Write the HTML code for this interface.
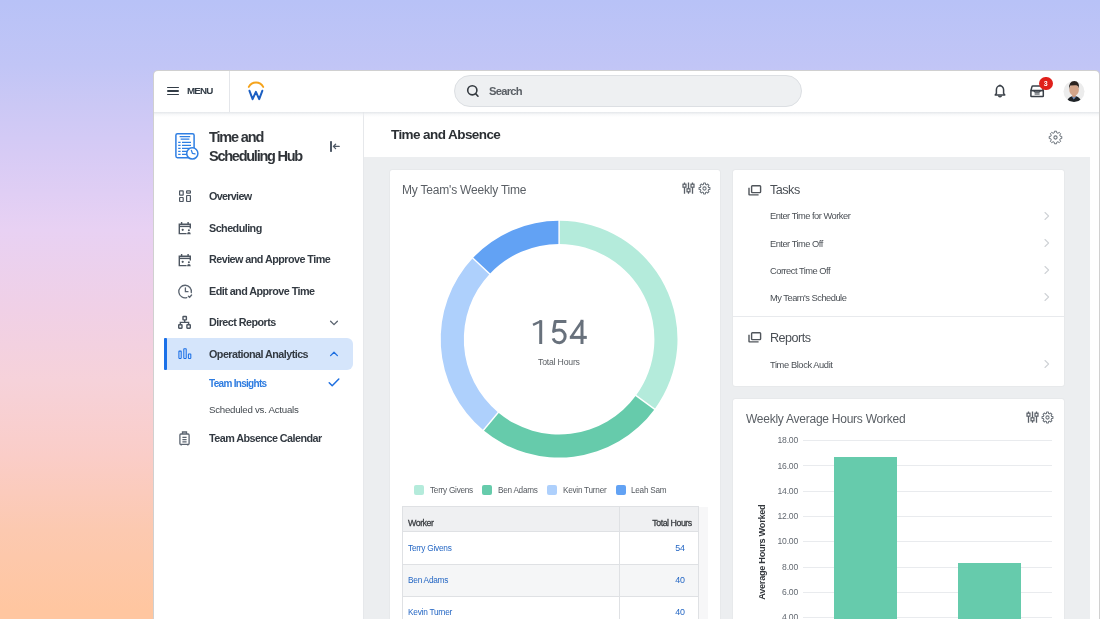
<!DOCTYPE html>
<html><head><meta charset="utf-8">
<style>
*{margin:0;padding:0;box-sizing:border-box;}
html,body{width:1100px;height:619px;overflow:hidden;}
body{font-family:"Liberation Sans",sans-serif;position:relative;
background:linear-gradient(180deg,#b8c2f7 0px,#c1c5f6 65px,#cbc8f5 105px,#d7cbf5 155px,#e8d1f3 230px,#f0d0e6 310px,#f6d2da 380px,#facdc8 455px,#fcc9b0 530px,#ffc6a0 610px);}
.a{position:absolute;}
.t{position:absolute;white-space:nowrap;line-height:1;will-change:transform;}
#win{position:absolute;left:153px;top:70px;width:947px;height:560px;background:#fff;border:1px solid rgba(60,60,60,0.24);border-radius:5px 5px 0 0;overflow:hidden;}
</style></head><body>
<div id="win"></div>

<!-- header -->

<div class="a" style="left:229px;top:71px;width:1px;height:41px;background:#e4e6ea"></div>

<!-- hamburger -->
<div class="a" style="left:167px;top:86.5px;width:12px;height:1.6px;background:#333d47;border-radius:1px"></div>
<div class="a" style="left:167px;top:90px;width:12px;height:1.6px;background:#333d47;border-radius:1px"></div>
<div class="a" style="left:167px;top:93.5px;width:12px;height:1.6px;background:#333d47;border-radius:1px"></div>
<div class="t" style="left:186.8px;top:86.2px;font-size:9.8px;font-weight:bold;color:#333d47;letter-spacing:-0.85px">MENU</div>

<!-- logo -->
<svg class="a" style="left:244px;top:78px" width="24" height="26" viewBox="0 0 24 26">
 <path d="M4.8 8.9 A8.1 8.1 0 0 1 19.2 8.9" fill="none" stroke="#f5a31b" stroke-width="1.9" stroke-linecap="round"/>
 <path d="M5.5 12.8 L8.6 21.2 L11.9 13.8 L15.2 21.2 L18.3 12.8" fill="none" stroke="#1c5fc2" stroke-width="2" stroke-linejoin="round" stroke-linecap="round"/>
</svg>

<!-- search -->
<div class="a" style="left:454px;top:75px;width:348px;height:32px;background:#eef0f2;border:1px solid #dcdfe3;border-radius:16px"></div>
<svg class="a" style="left:464px;top:82px" width="18" height="18" viewBox="0 0 18 18">
 <circle cx="8.3" cy="8.3" r="4.6" fill="none" stroke="#343a40" stroke-width="1.6"/>
 <path d="M11.6 11.6 L14 14.2" stroke="#343a40" stroke-width="1.6" stroke-linecap="round"/>
</svg>
<div class="t" style="left:489px;top:85.8px;font-size:11.2px;font-weight:bold;color:#5b6066;letter-spacing:-0.75px">Search</div>

<!-- right icons -->
<svg class="a" style="left:990px;top:80px" width="20" height="20" viewBox="0 0 20 20">
 <path d="M6.4 13.4 V9.8 A3.6 4.1 0 0 1 13.6 9.8 V13.4 L14.8 14.9 H5.2 Z" fill="none" stroke="#3a4048" stroke-width="1.5" stroke-linejoin="round"/>
 <path d="M8.4 15.6 Q10 18.2 11.6 15.6" fill="none" stroke="#3a4048" stroke-width="1.4"/>
 <circle cx="10" cy="5.4" r="0.9" fill="#3a4048"/>
</svg>
<svg class="a" style="left:1028px;top:83px" width="18" height="16" viewBox="0 0 18 16">
 <path d="M2.9 7.6 L3.9 3.9 Q4.1 3.1 4.9 3.1 L13.3 3.1 Q14.1 3.1 14.3 3.9 L15.3 7.6" fill="none" stroke="#3a4048" stroke-width="1.5" stroke-linejoin="round"/>
 <path d="M2.9 7.6 H15.3 V12.9 Q15.3 13.6 14.6 13.6 H3.6 Q2.9 13.6 2.9 12.9 Z" fill="none" stroke="#3a4048" stroke-width="1.5" stroke-linejoin="round"/>
 <path d="M3 7.6 H5.6 Q6.2 9 7 9 H11.2 Q12 9 12.6 7.6 H15.2" fill="none" stroke="#3a4048" stroke-width="1.3"/>
 <path d="M6.6 11 H11.6" stroke="#3a4048" stroke-width="1.1"/>
</svg>
<div class="a" style="left:1039px;top:76.5px;width:13.5px;height:13.5px;border-radius:50%;background:#e0201b;"></div>
<div class="t" style="left:1039px;top:80px;width:13.5px;text-align:center;font-size:7px;font-weight:bold;color:#fff">3</div>
<svg class="a" style="left:1063px;top:79.5px" width="22" height="23" viewBox="0 0 22 23">
 <defs><clipPath id="av"><circle cx="11" cy="11.5" r="10.5"/></clipPath></defs>
 <circle cx="11" cy="11.5" r="10.5" fill="#ececec"/>
 <g clip-path="url(#av)">
  <path d="M3.2 23 Q4.6 17.4 9 16.2 L13.2 16.2 Q17.4 17.2 18.8 23 Z" fill="#1f2327"/>
  <path d="M8.6 16.2 L10.8 19.6 L13.6 16.2 Z" fill="#6d8ec2"/>
 </g>
 <path d="M9.4 13.5 L12.6 13.5 L12.8 16.6 L10.6 17.6 L9.2 16.6 Z" fill="#c79478"/>
 <ellipse cx="11.1" cy="9.8" rx="4.8" ry="6" fill="#d3a58a"/>
 <path d="M6.1 9.2 Q5.4 1.4 11.4 1.1 Q16.6 1.4 16.1 8.4 Q15.6 5.4 13.4 5.2 Q10.4 5 7.4 5.6 Q6.4 6.8 6.1 9.2 Z" fill="#2b2420"/>
</svg>

<!-- sidebar -->
<div class="a" style="left:363px;top:112px;width:1px;height:510px;background:#e6e8eb"></div>
<div class="a" style="left:154px;top:112px;width:945px;height:5px;background:linear-gradient(rgba(225,228,232,0.9),rgba(240,242,244,0.5) 50%,rgba(255,255,255,0))"></div>


<!-- hub icon -->
<svg class="a" style="left:173px;top:131px" width="28" height="30" viewBox="0 0 28 30">
 <rect x="2.9" y="2.7" width="18.2" height="24" rx="1.6" fill="none" stroke="#2f7fe3" stroke-width="1.5"/>
 <path d="M6.6 5.6 H17.2 M7.6 8.2 H16.4" stroke="#2f7fe3" stroke-width="1.3"/>
 <path d="M5.2 11.4 H7.6 M9 11.4 H18 M5.2 14.4 H7.6 M9 14.4 H18 M5.2 17.4 H7.6 M9 17.4 H18 M5.2 20.4 H7.6 M9 20.4 H18 M5.2 23.4 H7.6 M9 23.4 H18" stroke="#2f7fe3" stroke-width="1.3"/>
 <circle cx="19.3" cy="22.4" r="5.6" fill="#fff" stroke="#2f7fe3" stroke-width="1.5"/>
 <path d="M18.4 19.4 L19.4 22.4 L22 22.8" fill="none" stroke="#2f7fe3" stroke-width="1.3" stroke-linecap="round" stroke-linejoin="round"/>
</svg>
<div class="t" style="left:208.5px;top:130.3px;font-size:14.5px;font-weight:bold;color:#303439;letter-spacing:-1.15px">Time and</div>
<div class="t" style="left:208.5px;top:149.2px;font-size:14.5px;font-weight:bold;color:#303439;letter-spacing:-1.25px">Scheduling Hub</div>
<!-- collapse -->
<div class="a" style="left:330.2px;top:141px;width:1.4px;height:10.6px;background:#505a67;border-radius:0.7px"></div>
<svg class="a" style="left:332px;top:142px" width="9" height="9" viewBox="0 0 9 9">
 <path d="M1.4 4.4 H7.2 M3.6 2.2 L1.4 4.4 L3.6 6.6" fill="none" stroke="#505a67" stroke-width="1.3" stroke-linecap="round" stroke-linejoin="round"/>
</svg>

<!-- nav icons -->
<svg class="a" style="left:176px;top:188px" width="16" height="16" viewBox="0 0 16 16">
 <g fill="none" stroke="#4d5661" stroke-width="1.2">
 <rect x="3.6" y="2.9" width="3.6" height="4.3" rx="0.4"/><rect x="3.6" y="9.5" width="3.6" height="4" rx="0.4"/>
 <rect x="10.6" y="2.9" width="3.8" height="2.3" rx="0.4"/><rect x="10.6" y="7.5" width="3.8" height="6" rx="0.4"/>
 </g>
</svg>
<svg class="a" style="left:176px;top:220px" width="16" height="16" viewBox="0 0 16 16">
 <g fill="none" stroke="#4d5661" stroke-width="1.4">
 <path d="M14.3 8.6 V4.3 H3.3 V13.6 H10.6"/><path d="M3.3 6.4 H14.3"/><path d="M5.6 2 V4.6 M12.1 2 V4.6"/>
 </g>
 <circle cx="6.7" cy="9.8" r="1.1" fill="#4d5661"/>
 <circle cx="12.9" cy="10.3" r="1" fill="#4d5661"/><path d="M11 14.3 Q11.2 11.9 12.9 11.9 Q14.6 11.9 14.8 14.3 Z" fill="#4d5661"/>
</svg>
<svg class="a" style="left:176px;top:252px" width="16" height="16" viewBox="0 0 16 16">
 <g fill="none" stroke="#4d5661" stroke-width="1.4">
 <path d="M14.3 8.6 V4.3 H3.3 V13.6 H10.6"/><path d="M3.3 6.4 H14.3"/><path d="M5.6 2 V4.6 M12.1 2 V4.6"/>
 </g>
 <circle cx="6.7" cy="9.8" r="1.1" fill="#4d5661"/>
 <circle cx="12.9" cy="10.3" r="1" fill="#4d5661"/><path d="M11 14.3 Q11.2 11.9 12.9 11.9 Q14.6 11.9 14.8 14.3 Z" fill="#4d5661"/>
</svg>
<svg class="a" style="left:177px;top:282.7px" width="17" height="17" viewBox="0 0 17 17">
 <g fill="none" stroke="#5b6470" stroke-width="1.3" stroke-linecap="round">
 <path d="M14.3 9.6 A6.3 6.3 0 1 0 9.8 14.6"/><path d="M8.4 5 V8.7 H11"/><path d="M11.4 13.2 L12.6 14.3 L14.6 12"/>
 </g>
</svg>
<svg class="a" style="left:176px;top:315px" width="17" height="16" viewBox="0 0 17 16">
 <g fill="none" stroke="#4d5661" stroke-width="1.4">
 <rect x="7" y="1.5" width="3.4" height="3.4" rx="0.4"/><rect x="2.7" y="9.8" width="3.3" height="3.4" rx="0.4"/><rect x="10.9" y="9.8" width="3.4" height="3.4" rx="0.4"/>
 <path d="M8.7 4.9 V7.4 M4.35 9.8 V7.4 H12.6 V9.8"/>
 </g>
</svg>
<svg class="a" style="left:329px;top:318px" width="10" height="10" viewBox="0 0 10 10">
 <path d="M1.6 3.2 L5 6.6 L8.4 3.2" fill="none" stroke="#5b6470" stroke-width="1.3" stroke-linecap="round" stroke-linejoin="round"/>
</svg>

<!-- selected -->
<div class="a" style="left:164px;top:338px;width:188.5px;height:32px;background:#d5e5fb;border-radius:0 6px 6px 0"></div>
<div class="a" style="left:163.8px;top:338px;width:2.8px;height:32px;background:#1a70e8;border-radius:1px"></div>
<svg class="a" style="left:176px;top:346px" width="17" height="15" viewBox="0 0 17 15">
 <g fill="none" stroke="#1a6fe6" stroke-width="1.05">
 <rect x="2.9" y="5.1" width="2.3" height="7.3" rx="0.3"/><rect x="7.8" y="2.8" width="2.4" height="9.6" rx="0.3"/><rect x="12.4" y="7.9" width="2.4" height="4.5" rx="0.3"/>
 </g>
</svg>
<svg class="a" style="left:329px;top:349px" width="10" height="10" viewBox="0 0 10 10">
 <path d="M1.6 6.6 L5 3.2 L8.4 6.6" fill="none" stroke="#1e6fe0" stroke-width="1.3" stroke-linecap="round" stroke-linejoin="round"/>
</svg>
<svg class="a" style="left:328px;top:377px" width="12" height="11" viewBox="0 0 12 11">
 <path d="M1.2 5.8 L4.2 8.8 L10.8 2" fill="none" stroke="#1e6fe0" stroke-width="1.5" stroke-linecap="round" stroke-linejoin="round"/>
</svg>
<svg class="a" style="left:177px;top:430px" width="15" height="16" viewBox="0 0 15 16">
 <g fill="none" stroke="#5b6470" stroke-width="1.3">
 <rect x="2.9" y="4" width="9.2" height="10.4" rx="1"/><path d="M5.5 4 V2 H9.5 V4"/><path d="M5.4 7.4 H9.6 M5.4 9.6 H9.6 M5.4 11.8 H9.6"/>
 <path d="M4.2 14.4 V15.4 M10.8 14.4 V15.4"/>
 </g>
</svg>

<div class="t" style="left:208.5px;top:191px;font-size:10.8px;font-weight:bold;color:#333a42;letter-spacing:-0.7px">Overview</div>
<div class="t" style="left:208.5px;top:222.5px;font-size:10.8px;font-weight:bold;color:#333a42;letter-spacing:-0.55px">Scheduling</div>
<div class="t" style="left:208.5px;top:254px;font-size:10.8px;font-weight:bold;color:#333a42;letter-spacing:-0.55px">Review and Approve Time</div>
<div class="t" style="left:208.5px;top:285.5px;font-size:10.8px;font-weight:bold;color:#333a42;letter-spacing:-0.55px">Edit and Approve Time</div>
<div class="t" style="left:208.5px;top:317.3px;font-size:10.8px;font-weight:bold;color:#333a42;letter-spacing:-0.55px">Direct Reports</div>
<div class="t" style="left:208.5px;top:348.7px;font-size:10.8px;font-weight:bold;color:#333a42;letter-spacing:-0.55px">Operational Analytics</div>
<div class="t" style="left:208.5px;top:379.2px;font-size:10px;font-weight:bold;color:#2e7ce0;letter-spacing:-0.7px">Team Insights</div>
<div class="t" style="left:208.5px;top:404.8px;font-size:9.7px;color:#444a50;letter-spacing:-0.25px">Scheduled vs. Actuals</div>
<div class="t" style="left:208.5px;top:432.7px;font-size:10.8px;font-weight:bold;color:#333a42;letter-spacing:-0.55px">Team Absence Calendar</div>

<!-- content gray -->
<div class="a" style="left:364px;top:157px;width:726px;height:470px;background:#eceef0"></div>
<div class="t" style="left:390.5px;top:127.5px;font-size:13.5px;font-weight:bold;color:#2b2f33;letter-spacing:-0.58px">Time and Absence</div>
<svg class="a" style="left:1048.3px;top:129.5px" width="15" height="15" viewBox="0 0 24 24">
 <path fill="none" stroke="#6c737b" stroke-width="1.6" stroke-linejoin="round" d="M10.06 4.45 L10.33 1.94 L13.67 1.94 L13.94 4.45 L15.97 5.29 L17.93 3.70 L20.30 6.07 L18.71 8.03 L19.55 10.06 L22.06 10.33 L22.06 13.67 L19.55 13.94 L18.71 15.97 L20.30 17.93 L17.93 20.30 L15.97 18.71 L13.94 19.55 L13.67 22.06 L10.33 22.06 L10.06 19.55 L8.03 18.71 L6.07 20.30 L3.70 17.93 L5.29 15.97 L4.45 13.94 L1.94 13.67 L1.94 10.33 L4.45 10.06 L5.29 8.03 L3.70 6.07 L6.07 3.70 L8.03 5.29 Z"/>
 <circle cx="12" cy="12" r="2.6" fill="none" stroke="#6c737b" stroke-width="1.7"/>
</svg>

<!-- card 1 -->
<div class="a" style="left:390px;top:170px;width:330px;height:460px;background:#fff;border-radius:2.5px;box-shadow:0 0 1px 1px rgba(0,0,0,0.025)"></div>
<!-- card 2 -->
<div class="a" style="left:733px;top:170px;width:331px;height:216px;background:#fff;border-radius:2.5px;box-shadow:0 0 1px 1px rgba(0,0,0,0.025)"></div>
<!-- card 3 -->
<div class="a" style="left:733px;top:399px;width:331px;height:230px;background:#fff;border-radius:2.5px;box-shadow:0 0 1px 1px rgba(0,0,0,0.025)"></div>

<div class="t" style="left:402px;top:183.5px;font-size:12px;color:#5a5f65;letter-spacing:-0.2px">My Team's Weekly Time</div>
<svg class="a" style="left:681px;top:181px" width="14" height="14" viewBox="0 0 14 14">
 <g stroke="#5a6068" stroke-width="1.3" fill="none">
 <path d="M3.5 1.5 V12.8 M7.5 1.5 V12.8 M11.5 1.5 V12.8"/>
 </g>
 <rect x="2" y="3.2" width="3" height="3" fill="#fff" stroke="#5a6068" stroke-width="1.2"/>
 <rect x="6" y="7.8" width="3" height="3" fill="#fff" stroke="#5a6068" stroke-width="1.2"/>
 <rect x="10" y="3.2" width="3" height="3" fill="#fff" stroke="#5a6068" stroke-width="1.2"/>
</svg>
<svg class="a" style="left:697.8px;top:182.4px" width="13" height="13" viewBox="0 0 24 24">
 <path fill="none" stroke="#6c737b" stroke-width="1.9" stroke-linejoin="round" d="M10.06 4.45 L10.33 1.94 L13.67 1.94 L13.94 4.45 L15.97 5.29 L17.93 3.70 L20.30 6.07 L18.71 8.03 L19.55 10.06 L22.06 10.33 L22.06 13.67 L19.55 13.94 L18.71 15.97 L20.30 17.93 L17.93 20.30 L15.97 18.71 L13.94 19.55 L13.67 22.06 L10.33 22.06 L10.06 19.55 L8.03 18.71 L6.07 20.30 L3.70 17.93 L5.29 15.97 L4.45 13.94 L1.94 13.67 L1.94 10.33 L4.45 10.06 L5.29 8.03 L3.70 6.07 L6.07 3.70 L8.03 5.29 Z"/>
 <circle cx="12" cy="12" r="3" fill="none" stroke="#6c737b" stroke-width="1.9"/>
</svg>
<svg class="a" style="left:0;top:0" width="1100" height="619"><path d="M559.10 220.80 A118.4 118.4 0 0 1 654.60 409.18 L635.97 395.53 A95.3 95.3 0 0 0 559.10 243.90 Z" fill="#b4ebdb"/><path d="M654.60 409.18 A118.4 118.4 0 0 1 483.41 430.24 L498.17 412.48 A95.3 95.3 0 0 0 635.97 395.53 Z" fill="#66cbab"/><path d="M483.41 430.24 A118.4 118.4 0 0 1 472.86 258.08 L489.68 273.91 A95.3 95.3 0 0 0 498.17 412.48 Z" fill="#aed0fc"/><path d="M472.86 258.08 A118.4 118.4 0 0 1 559.10 220.80 L559.10 243.90 A95.3 95.3 0 0 0 489.68 273.91 Z" fill="#62a2f4"/><path d="M559.10 245.90 L559.10 218.80" stroke="#fff" stroke-width="1.4"/><path d="M634.36 394.35 L656.22 410.37" stroke="#fff" stroke-width="1.4"/><path d="M499.45 410.94 L482.13 431.78" stroke="#fff" stroke-width="1.4"/><path d="M491.14 275.28 L471.40 256.71" stroke="#fff" stroke-width="1.4"/></svg>
<svg class="a" style="left:0;top:0" width="1100" height="619"><g fill="none" stroke="#68717c" stroke-width="3.0">
 <path d="M540.7 344 V320.2" /><path d="M533 324.9 L541.2 321" stroke-width="2.3"/>
 <path stroke-linejoin="round" d="M566.4 321.4 H555.2 L553.6 331.4 C555 330.4 557 330.1 559.4 330.1 A5.75 6.3 0 0 1 565.15 336.4 A5.75 6.3 0 0 1 559.4 342.7 C556.3 342.7 554.1 341.3 553.2 338.4"/>
 <path d="M582 344 V319.8"/><path d="M582.4 320.6 L571 337.2" stroke-width="2.6"/><path d="M569.8 337.4 H586.8"/>
</g></svg>
<div class="t" style="left:537.5px;top:357.6px;font-size:8.7px;color:#5d6166;letter-spacing:-0.2px">Total Hours</div>

<!-- legend -->
<div class="a" style="left:413.6px;top:484.8px;width:10.5px;height:10.5px;border-radius:2px;background:#b4ebdb"></div>
<div class="a" style="left:481.8px;top:484.8px;width:10.5px;height:10.5px;border-radius:2px;background:#66cbab"></div>
<div class="a" style="left:546.9px;top:484.8px;width:10.5px;height:10.5px;border-radius:2px;background:#aed0fc"></div>
<div class="a" style="left:615.6px;top:484.8px;width:10.5px;height:10.5px;border-radius:2px;background:#62a2f4"></div>
<div class="t" style="left:429.5px;top:486.5px;font-size:8.2px;color:#555a60;letter-spacing:-0.25px">Terry Givens</div>
<div class="t" style="left:497.8px;top:486.5px;font-size:8.2px;color:#555a60;letter-spacing:-0.25px">Ben Adams</div>
<div class="t" style="left:562.8px;top:486.5px;font-size:8.2px;color:#555a60;letter-spacing:-0.25px">Kevin Turner</div>
<div class="t" style="left:631.3px;top:486.5px;font-size:8.2px;color:#555a60;letter-spacing:-0.25px">Leah Sam</div>

<!-- table -->
<div class="a" style="left:698.5px;top:506.5px;width:9px;height:130px;background:#f7f7f8"></div>
<div class="a" style="left:402px;top:506px;width:297px;height:130px;border:1px solid #dfe1e4;background:#fff"></div>
<div class="a" style="left:403px;top:507px;width:295px;height:24.5px;background:#eff0f2"></div>
<div class="a" style="left:403px;top:531px;width:295px;height:1px;background:#dfe1e4"></div>
<div class="a" style="left:403px;top:564px;width:295px;height:32px;background:#f5f6f7"></div>
<div class="a" style="left:403px;top:563.5px;width:295px;height:1px;background:#dfe1e4"></div>
<div class="a" style="left:403px;top:596px;width:295px;height:1px;background:#dfe1e4"></div>
<div class="a" style="left:619px;top:507px;width:1px;height:130px;background:#dfe1e4"></div>
<div class="t" style="left:408px;top:518.5px;font-size:8.8px;color:#3a3d41;-webkit-text-stroke:0.3px #3a3d41;letter-spacing:-0.45px">Worker</div>
<div class="t" style="left:591px;top:518.5px;width:100.8px;text-align:right;font-size:8.8px;color:#3a3d41;-webkit-text-stroke:0.3px #3a3d41;letter-spacing:-0.45px">Total Hours</div>
<div class="t" style="left:408px;top:543.5px;font-size:8.3px;color:#2567c4;letter-spacing:-0.25px">Terry Givens</div>
<div class="t" style="left:408px;top:575.6px;font-size:8.3px;color:#2567c4;letter-spacing:-0.25px">Ben Adams</div>
<div class="t" style="left:408px;top:608px;font-size:8.3px;color:#2567c4;letter-spacing:-0.25px">Kevin Turner</div>
<div class="t" style="left:635px;top:543.5px;width:50px;text-align:right;font-size:8.9px;color:#2567c4">54</div>
<div class="t" style="left:635px;top:575.6px;width:50px;text-align:right;font-size:8.9px;color:#2567c4">40</div>
<div class="t" style="left:635px;top:608px;width:50px;text-align:right;font-size:8.9px;color:#2567c4">40</div>

<svg class="a" style="left:747px;top:183.5px" width="16" height="13" viewBox="0 0 16 13"><rect x="4.6" y="1.7" width="9" height="6.9" rx="0.8" fill="none" stroke="#50555b" stroke-width="1.4"/><path d="M2 3.8 V10.5 Q2 10.9 2.4 10.9 H11.6" fill="none" stroke="#50555b" stroke-width="1.4"/></svg>
<div class="t" style="left:769.5px;top:183.5px;font-size:12.6px;color:#4a4f55;letter-spacing:-0.5px">Tasks</div>
<div class="t" style="left:769.5px;top:212.4px;font-size:9.3px;color:#4a4f55;letter-spacing:-0.5px">Enter Time for Worker</div>
<div class="t" style="left:769.5px;top:240.1px;font-size:9.3px;color:#4a4f55;letter-spacing:-0.5px">Enter Time Off</div>
<div class="t" style="left:769.5px;top:267.4px;font-size:9.3px;color:#4a4f55;letter-spacing:-0.5px">Correct Time Off</div>
<div class="t" style="left:769.5px;top:294.4px;font-size:9.3px;color:#4a4f55;letter-spacing:-0.5px">My Team's Schedule</div>
<div class="a" style="left:733px;top:316px;width:331px;height:1px;background:#e8eaed"></div>
<svg class="a" style="left:747px;top:331px" width="16" height="13" viewBox="0 0 16 13"><rect x="4.6" y="1.7" width="9" height="6.9" rx="0.8" fill="none" stroke="#50555b" stroke-width="1.4"/><path d="M2 3.8 V10.5 Q2 10.9 2.4 10.9 H11.6" fill="none" stroke="#50555b" stroke-width="1.4"/></svg>
<div class="t" style="left:769.5px;top:332.2px;font-size:12.6px;color:#4a4f55;letter-spacing:-0.5px">Reports</div>
<div class="t" style="left:769.5px;top:360.6px;font-size:9.3px;color:#4a4f55;letter-spacing:-0.4px">Time Block Audit</div>
<svg class="a" style="left:1043px;top:210.5px" width="8" height="10" viewBox="0 0 8 10"><path d="M2 1.5 L5.6 5 L2 8.5" fill="none" stroke="#cfd2d6" stroke-width="1.1" stroke-linecap="round" stroke-linejoin="round"/></svg>
<svg class="a" style="left:1043px;top:237.8px" width="8" height="10" viewBox="0 0 8 10"><path d="M2 1.5 L5.6 5 L2 8.5" fill="none" stroke="#cfd2d6" stroke-width="1.1" stroke-linecap="round" stroke-linejoin="round"/></svg>
<svg class="a" style="left:1043px;top:264.9px" width="8" height="10" viewBox="0 0 8 10"><path d="M2 1.5 L5.6 5 L2 8.5" fill="none" stroke="#cfd2d6" stroke-width="1.1" stroke-linecap="round" stroke-linejoin="round"/></svg>
<svg class="a" style="left:1043px;top:292.0px" width="8" height="10" viewBox="0 0 8 10"><path d="M2 1.5 L5.6 5 L2 8.5" fill="none" stroke="#cfd2d6" stroke-width="1.1" stroke-linecap="round" stroke-linejoin="round"/></svg>
<svg class="a" style="left:1043px;top:358.5px" width="8" height="10" viewBox="0 0 8 10"><path d="M2 1.5 L5.6 5 L2 8.5" fill="none" stroke="#cfd2d6" stroke-width="1.1" stroke-linecap="round" stroke-linejoin="round"/></svg>

<div class="t" style="left:745.5px;top:412.5px;font-size:12px;color:#5a5f65;letter-spacing:-0.25px">Weekly Average Hours Worked</div>
<svg class="a" style="left:1025px;top:410px" width="14" height="14" viewBox="0 0 14 14">
 <g stroke="#5a6068" stroke-width="1.3" fill="none">
 <path d="M3.5 1.5 V12.8 M7.5 1.5 V12.8 M11.5 1.5 V12.8"/>
 </g>
 <rect x="2" y="3.2" width="3" height="3" fill="#fff" stroke="#5a6068" stroke-width="1.2"/>
 <rect x="6" y="7.8" width="3" height="3" fill="#fff" stroke="#5a6068" stroke-width="1.2"/>
 <rect x="10" y="3.2" width="3" height="3" fill="#fff" stroke="#5a6068" stroke-width="1.2"/>
</svg>
<svg class="a" style="left:1041.3px;top:411px" width="13" height="13" viewBox="0 0 24 24">
 <path fill="none" stroke="#6c737b" stroke-width="1.9" stroke-linejoin="round" d="M10.06 4.45 L10.33 1.94 L13.67 1.94 L13.94 4.45 L15.97 5.29 L17.93 3.70 L20.30 6.07 L18.71 8.03 L19.55 10.06 L22.06 10.33 L22.06 13.67 L19.55 13.94 L18.71 15.97 L20.30 17.93 L17.93 20.30 L15.97 18.71 L13.94 19.55 L13.67 22.06 L10.33 22.06 L10.06 19.55 L8.03 18.71 L6.07 20.30 L3.70 17.93 L5.29 15.97 L4.45 13.94 L1.94 13.67 L1.94 10.33 L4.45 10.06 L5.29 8.03 L3.70 6.07 L6.07 3.70 L8.03 5.29 Z"/>
 <circle cx="12" cy="12" r="3" fill="none" stroke="#6c737b" stroke-width="1.9"/>
</svg>
<div class="a" style="left:802.5px;top:440.0px;width:249px;height:1px;background:#e9ebee"></div>
<div class="t" style="left:747.5px;top:436.2px;width:50px;text-align:right;font-size:8.6px;color:#636971;letter-spacing:-0.2px">18.00</div>
<div class="a" style="left:802.5px;top:465.3px;width:249px;height:1px;background:#e9ebee"></div>
<div class="t" style="left:747.5px;top:461.5px;width:50px;text-align:right;font-size:8.6px;color:#636971;letter-spacing:-0.2px">16.00</div>
<div class="a" style="left:802.5px;top:490.6px;width:249px;height:1px;background:#e9ebee"></div>
<div class="t" style="left:747.5px;top:486.8px;width:50px;text-align:right;font-size:8.6px;color:#636971;letter-spacing:-0.2px">14.00</div>
<div class="a" style="left:802.5px;top:515.9px;width:249px;height:1px;background:#e9ebee"></div>
<div class="t" style="left:747.5px;top:512.1px;width:50px;text-align:right;font-size:8.6px;color:#636971;letter-spacing:-0.2px">12.00</div>
<div class="a" style="left:802.5px;top:541.2px;width:249px;height:1px;background:#e9ebee"></div>
<div class="t" style="left:747.5px;top:537.4px;width:50px;text-align:right;font-size:8.6px;color:#636971;letter-spacing:-0.2px">10.00</div>
<div class="a" style="left:802.5px;top:566.5px;width:249px;height:1px;background:#e9ebee"></div>
<div class="t" style="left:747.5px;top:562.7px;width:50px;text-align:right;font-size:8.6px;color:#636971;letter-spacing:-0.2px">8.00</div>
<div class="a" style="left:802.5px;top:591.8px;width:249px;height:1px;background:#e9ebee"></div>
<div class="t" style="left:747.5px;top:588.0px;width:50px;text-align:right;font-size:8.6px;color:#636971;letter-spacing:-0.2px">6.00</div>
<div class="a" style="left:802.5px;top:617.1px;width:249px;height:1px;background:#e9ebee"></div>
<div class="t" style="left:747.5px;top:613.3px;width:50px;text-align:right;font-size:8.6px;color:#636971;letter-spacing:-0.2px">4.00</div>
<div class="a" style="left:833.5px;top:457.3px;width:63px;height:170px;background:#66cbac"></div>
<div class="a" style="left:958px;top:562.5px;width:63px;height:70px;background:#66cbac"></div>
<svg class="a" style="left:750px;top:500px" width="24" height="105"><text transform="translate(14.5 52.2) rotate(-90)" text-anchor="middle" font-family="Liberation Sans" font-size="9.2" font-weight="bold" fill="#33373c" letter-spacing="-0.3">Average Hours Worked</text></svg>

<!-- right white strip -->
<div class="a" style="left:1090px;top:157px;width:9px;height:470px;background:#fff"></div>

</body></html>
